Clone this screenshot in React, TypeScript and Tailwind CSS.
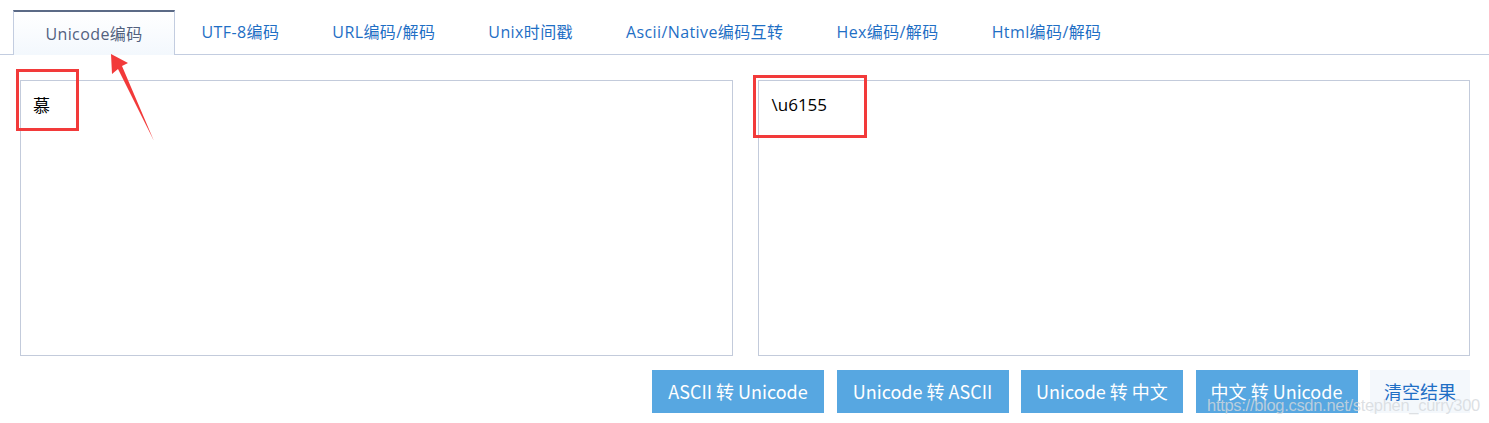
import { useState } from 'react'

const TABS = [
  'Unicode编码',
  'UTF-8编码',
  'URL编码/解码',
  'Unix时间戳',
  'Ascii/Native编码互转',
  'Hex编码/解码',
  'Html编码/解码',
]

const ACTIONS = [
  { label: 'ASCII 转 Unicode', width: 'w-[172px]' },
  { label: 'Unicode 转 ASCII', width: 'w-[172px]' },
  { label: 'Unicode 转 中文', width: 'w-[162px]' },
  { label: '中文 转 Unicode', width: 'w-[162px]' },
]

const FONT = "font-['Open_Sans','Noto_Sans_CJK_SC',sans-serif]"

export default function App() {
  const [active, setActive] = useState(0)
  const [source, setSource] = useState('慕')
  const [result, setResult] = useState('\\u6155')

  return (
    <div className={`relative h-[423px] w-full overflow-hidden bg-white ${FONT}`}>
      {/* Tabs */}
      <div className="flex items-end border-b border-[#c3cde0] pl-[13px] pt-[10px]">
        {TABS.map((tab, i) =>
          i === active ? (
            <button
              key={tab}
              onClick={() => setActive(i)}
              className="-mb-px h-[45px] w-[162px] border-x border-t-2 border-x-[#c3cde0] border-t-[#5b6a86] bg-gradient-to-b from-white to-[#f3f8fd] text-[16px] tracking-[0.4px] text-[#52617e]"
            >
              {tab}
            </button>
          ) : (
            <button
              key={tab}
              onClick={() => setActive(i)}
              className="h-[44px] px-[26.5px] text-[16px] tracking-[0.4px] text-[#1f6fc5]"
            >
              {tab}
            </button>
          ),
        )}
      </div>

      {/* Input / output */}
      <div className="grid grid-cols-2 gap-[25px] pl-[20px] pr-[19px] pt-[25px]">
        <textarea
          value={source}
          onChange={(e) => setSource(e.target.value)}
          className="h-[276px] resize-none border border-[#c3cbdb] px-[12px] py-[12px] text-[17px] leading-[26px] text-black outline-none"
        />
        <textarea
          value={result}
          onChange={(e) => setResult(e.target.value)}
          className="h-[276px] resize-none border border-[#c3cbdb] px-[13px] py-[11px] text-[17px] leading-[26px] text-black outline-none"
        />
      </div>

      {/* Actions */}
      <div className="flex justify-end gap-[12.5px] pr-[19px] pt-[14px]">
        {ACTIONS.map((a) => (
          <button
            key={a.label}
            className={`h-[43px] ${a.width} bg-[#57a7e1] font-['Noto_Sans_CJK_SC',sans-serif] text-[18px] text-white`}
          >
            {a.label}
          </button>
        ))}
        <button
          onClick={() => setResult('')}
          className="h-[43px] w-[100px] bg-[#f4f8fc] font-['Noto_Sans_CJK_SC',sans-serif] text-[18px] text-[#1f6fc5]"
        >
          清空结果
        </button>
      </div>

      {/* Annotations */}
      <div className="pointer-events-none absolute left-[16px] top-[69px] h-[62px] w-[63px] border-[3px] border-[#f23a3a]" />
      <div className="pointer-events-none absolute left-[753px] top-[75px] h-[63px] w-[114px] border-[3px] border-[#f23a3a]" />
      <svg className="pointer-events-none absolute left-0 top-0" width="200" height="160" viewBox="0 0 200 160">
        <polygon points="111,54 128,63 122,66 154,141 118,69 112,74" fill="#f23a3a" />
      </svg>
      <div className="pointer-events-none absolute right-[9px] top-[393px] font-['Liberation_Sans',sans-serif] text-[16.5px] tracking-[-0.3px] text-[#d4d8dc]/80">
        https://blog.csdn.net/stephen_curry300
      </div>
    </div>
  )
}
